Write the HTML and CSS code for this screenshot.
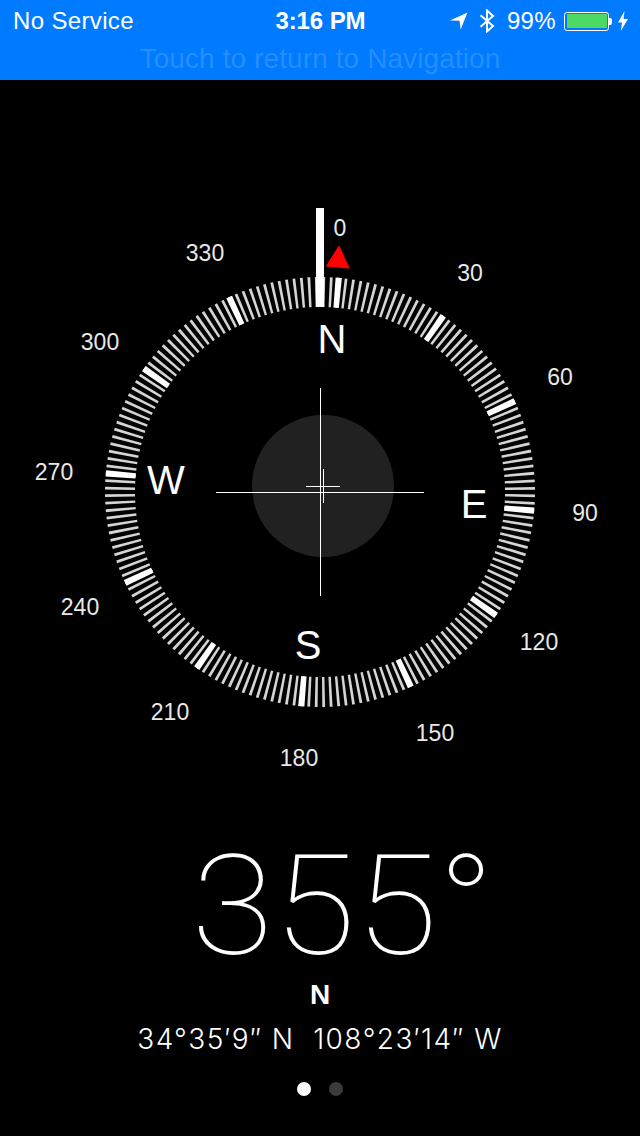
FILE: index.html
```html
<!DOCTYPE html>
<html lang="en">
<head>
<meta charset="utf-8">
<title>Compass</title>
<link rel="stylesheet" href="styles.css">
</head>
<body>
<div class="screen">
  <header class="banner">
    <div class="status">
      <span class="carrier">No Service</span>
      <span class="clock">3:16 PM</span>
      <div class="status-right">
        <svg class="ic-loc" viewBox="0 0 18 18"><path d="M0 8.4 17.5 0.5 10.6 17.5 9.6 8.8Z"/></svg>
        <svg class="ic-bt" viewBox="0 0 16 24"><path d="M1.5 6.3 14 17 8 22.5V1.5L14 7 1.5 17.7" /></svg>
        <span class="pct">99%</span>
        <div class="battery"><div class="battery-fill"></div></div>
        <div class="nub"></div>
        <svg class="ic-bolt" viewBox="0 0 10 20"><path d="M6.5 0 0 11.5H4L2.8 20 10 8H5.6Z"/></svg>
      </div>
    </div>
    <div class="return">Touch to return to Navigation</div>
  </header>

  <svg class="dial" viewBox="0 80 640 720">
    <g transform="rotate(5 320 492)">
      <circle class="ticks" cx="320" cy="492" r="200" pathLength="360"/>
      <circle class="majors" cx="320" cy="492" r="200" pathLength="360"/>
    </g>
    <rect class="needle" x="316" y="208" width="8" height="99"/>
    <polygon class="marker" points="339,246 326.5,266 349,268"/>
    <g class="degrees">
      <text x="340" y="236">0</text>
      <text x="470" y="281">30</text>
      <text x="560" y="385">60</text>
      <text x="585" y="521">90</text>
      <text x="539" y="650">120</text>
      <text x="435" y="741">150</text>
      <text x="299" y="766">180</text>
      <text x="170" y="720">210</text>
      <text x="80" y="615">240</text>
      <text x="54" y="480">270</text>
      <text x="100" y="350">300</text>
      <text x="205" y="261">330</text>
    </g>
    <g class="cardinals">
      <text x="332" y="353">N</text>
      <text x="474" y="518">E</text>
      <text x="308" y="659">S</text>
      <text x="166" y="494">W</text>
    </g>
    <circle class="hub" cx="323" cy="486" r="71"/>
    <path class="cross" d="M320.5 388V596M216 492.5H424M323.5 469V503M306 486.5H340"/>
  </svg>

  <section class="readout">
    <div class="heading">355°</div>
    <div class="direction">N</div>
    <div class="coords">34°35′9″ N&nbsp;&nbsp;108°23′14″ W</div>
    <div class="pager"><span class="dot dot-on"></span><span class="dot"></span></div>
  </section>
</div>
</body>
</html>
```
FILE: styles.css
```css
* { box-sizing: border-box; }
html, body { margin: 0; background: #000; }
.screen {
  width: 640px;
  height: 1136px;
  overflow: hidden;
  background: #000;
  color: #fff;
  font-family: "Liberation Sans", Arial, sans-serif;
  display: flex;
  flex-direction: column;
}
.banner { height: 80px; background: #007aff; display: flex; flex-direction: column; flex: none; }
.status {
  height: 40px;
  padding: 0 12px 0 13px;
  display: grid;
  grid-template-columns: 1fr auto 1fr;
  align-items: center;
  font-size: 24px;
  line-height: 42px;
}
.carrier, .pct { letter-spacing: 0.35px; }
.clock { font-weight: 700; letter-spacing: -0.1px; }
.status-right { display: flex; align-items: center; justify-content: flex-end; }
.ic-loc { width: 18px; height: 18px; fill: #fff; margin-right: 11px; }
.ic-bt { width: 16px; height: 24px; fill: none; stroke: #fff; stroke-width: 2px; margin-right: 12px; }
.pct { margin-right: 8px; }
.battery { width: 45px; height: 19px; border: 1px solid #fff; border-radius: 3px; padding: 1.5px; }
.battery-fill { height: 100%; background: #4cd964; border-radius: 1px; }
.nub { width: 3px; height: 7px; background: #fff; border-radius: 0 2px 2px 0; margin-right: 6px; }
.ic-bolt { width: 10px; height: 20px; fill: #fff; }
.return {
  height: 40px;
  line-height: 38px;
  text-align: center;
  font-size: 28px;
  letter-spacing: 0.1px;
  color: rgba(255, 255, 255, 0.16);
}
.dial { display: block; width: 640px; height: 720px; flex: none; }
.ticks, .majors { fill: none; stroke-width: 30; }
.ticks { stroke: #d4d4d4; stroke-dasharray: 0.75 1.25; stroke-dashoffset: 0.375; }
.majors { stroke: #fff; stroke-dasharray: 1.7 28.3; stroke-dashoffset: 0.85; }
.needle { fill: #fff; }
.marker { fill: #f00; stroke: #f00; stroke-width: 1; stroke-linejoin: round; }
.degrees text { fill: #e8e8e8; font-size: 23px; text-anchor: middle; }
.cardinals text { fill: #fff; font-size: 40px; text-anchor: middle; }
.hub { fill: #212121; }
.cross { fill: none; stroke: #fff; stroke-width: 1; }
.readout { display: flex; flex-direction: column; align-items: center; flex: 1; }
.heading {
  margin-top: 36px;
  padding-left: 44px;
  height: 140px;
  line-height: 140px;
  font-family: Roboto, "Liberation Sans", sans-serif;
  font-weight: 100;
  font-size: 140px;
  white-space: nowrap;
  transform: scaleX(1.07);
}
.direction { margin-top: 3px; font-weight: 700; font-size: 28px; line-height: 32px; }
.coords { margin-top: 11px; font-family: Inter, sans-serif; font-weight: 300; font-size: 28px; line-height: 34px; letter-spacing: 1.45px; white-space: pre; }
.pager { margin-top: 26px; display: flex; gap: 18px; }
.dot { width: 14px; height: 14px; border-radius: 50%; background: #3a3a3a; }
.dot-on { background: #fff; }
```
